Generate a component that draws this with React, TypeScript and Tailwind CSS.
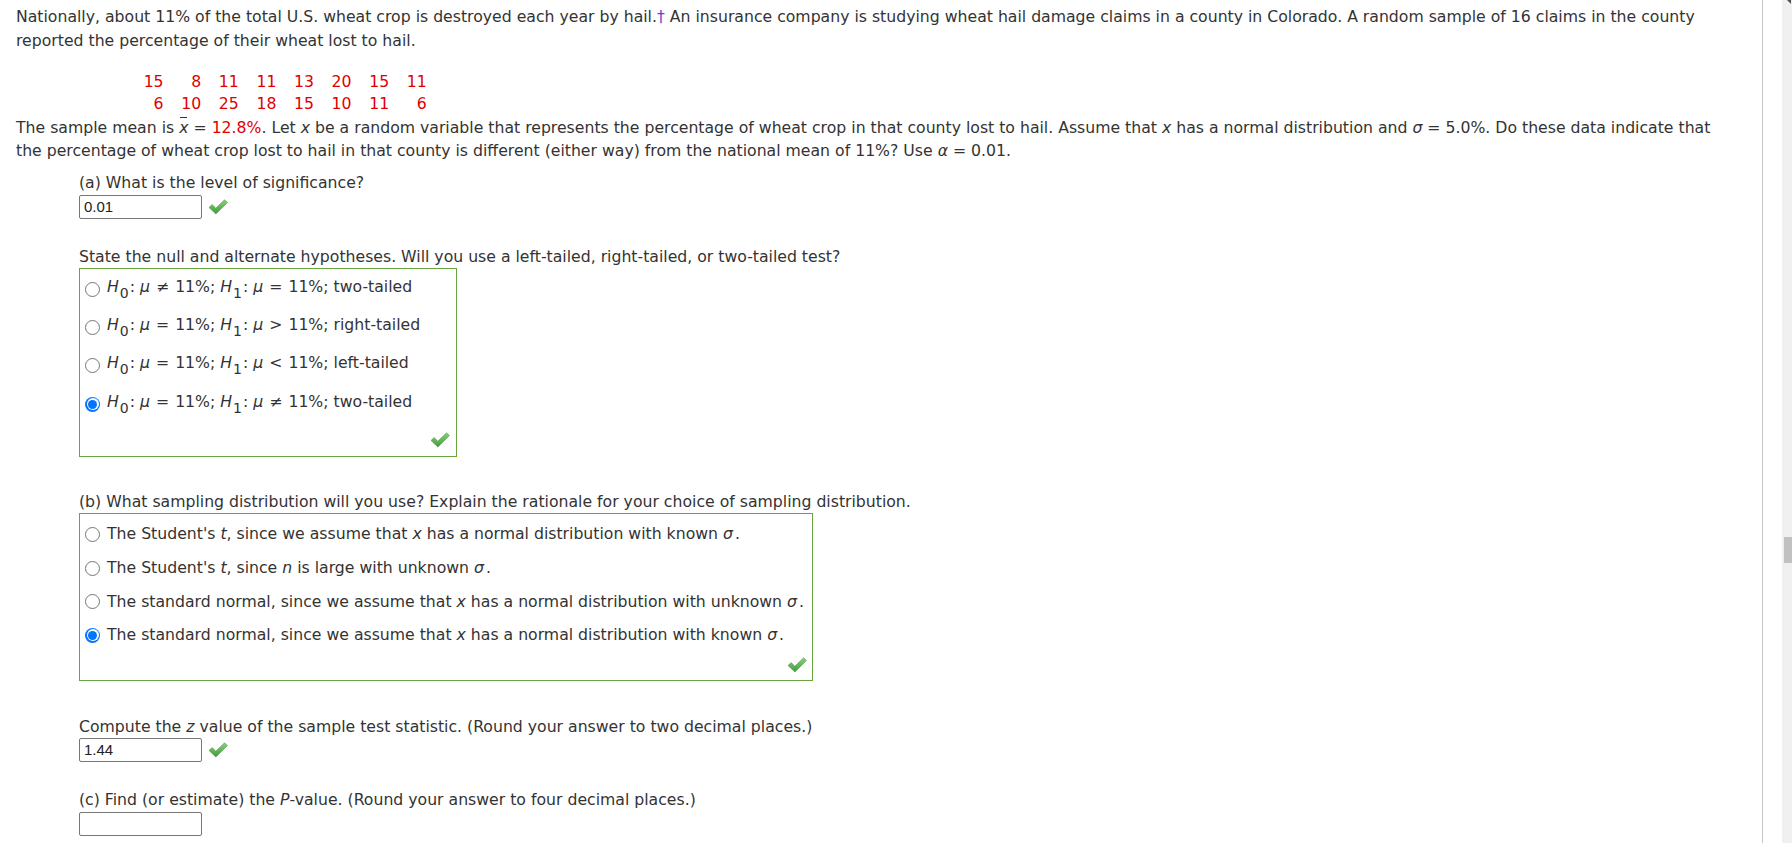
import type { ReactNode } from "react";

const sampleRows = [
  [15, 8, 11, 11, 13, 20, 15, 11],
  [6, 10, 25, 18, 15, 10, 11, 6],
];

function CheckMark() {
  return (
    <svg width="20" height="16" viewBox="0 0 20 16" className="shrink-0">
      <defs>
        <linearGradient id="chk" x1="0" y1="0" x2="0" y2="1">
          <stop offset="0" stopColor="#8fd17f" />
          <stop offset="1" stopColor="#3f9a3a" />
        </linearGradient>
      </defs>
      <path d="M1 8.5 L4.2 5.6 L7.8 9.2 L16.6 0.8 L19.4 3.6 L7.9 15 Z" fill="url(#chk)" stroke="#4a9a44" strokeWidth="0.6" />
    </svg>
  );
}

function Radio({ checked }: { checked?: boolean }) {
  if (checked) {
    return (
      <span className="flex h-[15px] w-[15px] shrink-0 items-center justify-center rounded-full bg-[#0075ff]">
        <span className="flex h-[12px] w-[12px] items-center justify-center rounded-full bg-white">
          <span className="h-[9px] w-[9px] rounded-full bg-[#0075ff]" />
        </span>
      </span>
    );
  }
  return <span className="h-[15px] w-[15px] shrink-0 rounded-full border border-[#767676] bg-white" />;
}

function AnswerBox({ value }: { value?: string }) {
  return (
    <div className="flex items-center gap-[6px]">
      <div className="flex h-[24px] w-[123px] items-center rounded-[2px] border border-[#767676] bg-white px-[4px] font-['Liberation_Sans',Arial,sans-serif] text-[15px] text-[#222]">
        {value}
      </div>
      {value && <CheckMark />}
    </div>
  );
}

// H with a dropped subscript, as the math renderer draws it
function H({ sub }: { sub: string }) {
  return (
    <>
      <i>H</i>
      <span className="pl-[1px] pr-[1px] align-[-6px] text-[14px]">{sub}</span>
    </>
  );
}

function Op({ children }: { children: ReactNode }) {
  return <span className="mx-[1px]">{children}</span>;
}

function Hyp({ h0, h1, kind }: { h0: string; h1: string; kind: string }) {
  return (
    <span className="whitespace-pre">
      <H sub="0" />: <i>μ</i> <Op>{h0}</Op> 11%; <H sub="1" />: <i>μ</i> <Op>{h1}</Op> 11%; {kind}
    </span>
  );
}

function Option({ checked, h, children }: { checked?: boolean; h: string; children: ReactNode }) {
  return (
    <div className={`flex items-center gap-[7px] pl-[5px] ${h}`}>
      <Radio checked={checked} />
      {children}
    </div>
  );
}

function Sigma() {
  return <i className="mr-[2px]">σ</i>;
}

export default function App() {
  return (
    <div className="flex h-[843px] w-full overflow-hidden bg-white font-['DejaVu_Sans',Verdana,sans-serif] text-[15.7px] text-[#333]">
      <div className="w-[1763px] shrink-0 border-r border-[#c8c8c8] pl-[16px] pt-[5px]">
        <p className="whitespace-nowrap leading-[24px]">
          Nationally, about 11% of the total U.S. wheat crop is destroyed each year by hail.
          <span className="text-[#6a3fd0]">†</span> An insurance company is studying wheat hail damage claims in a county
          in Colorado. A random sample of 16 claims in the county
          <br />
          reported the percentage of their wheat lost to hail.
        </p>

        <div className="ml-[110px] mt-[18px] grid grid-cols-[repeat(8,37.6px)] leading-[22px] text-[#e00000]">
          {sampleRows.flat().map((n, i) => (
            <span key={i} className="text-right">
              {n}
            </span>
          ))}
        </div>

        <p className="mt-[1px] whitespace-nowrap leading-[23px]">
          The sample mean is{" "}
          <span className="relative inline-block italic">
            x<span className="absolute left-[1px] top-[1px] h-[1px] w-[7px] bg-[#333]" />
          </span>{" "}
          = <span className="text-[#e00000]">12.8%</span>. Let <i>x</i> be a random variable that represents the
          percentage of wheat crop in that county lost to hail. Assume that <i>x</i> has a normal distribution and{" "}
          <i>σ</i> = 5.0%. Do these data indicate that
          <br />
          the percentage of wheat crop lost to hail in that county is different (either way) from the national mean of
          11%? Use <i>α</i> = 0.01.
        </p>

        <div className="ml-[63px]">
          <p className="mt-[10px] leading-[22px]">(a) What is the level of significance?</p>
          <div className="mt-[1px]">
            <AnswerBox value="0.01" />
          </div>

          <p className="mt-[27px] leading-[22px]">
            State the null and alternate hypotheses. Will you use a left-tailed, right-tailed, or two-tailed test?
          </p>
          <div className="flex h-[189px] w-[378px] flex-col border border-[#6aa43f]">
            <Option h="h-[39px] pt-[2px]">
              <Hyp h0="≠" h1="=" kind="two-tailed" />
            </Option>
            <Option h="h-[38px]">
              <Hyp h0="=" h1=">" kind="right-tailed" />
            </Option>
            <Option h="h-[39px]">
              <Hyp h0="=" h1="<" kind="left-tailed" />
            </Option>
            <Option checked h="h-[38px]">
              <Hyp h0="=" h1="≠" kind="two-tailed" />
            </Option>
            <div className="flex flex-1 items-end justify-end pb-[8px] pr-[6px]">
              <CheckMark />
            </div>
          </div>

          <p className="mt-[34px] leading-[22px]">
            (b) What sampling distribution will you use? Explain the rationale for your choice of sampling distribution.
          </p>
          <div className="flex h-[168px] w-[734px] flex-col border border-[#6aa43f] pt-[3px]">
            <Option h="h-[34px]">
              <span>
                The Student's <i>t</i>, since we assume that <i>x</i> has a normal distribution with known <Sigma />.
              </span>
            </Option>
            <Option h="h-[34px]">
              <span>
                The Student's <i>t</i>, since <i>n</i> is large with unknown <Sigma />.
              </span>
            </Option>
            <Option h="h-[33px]">
              <span>
                The standard normal, since we assume that <i>x</i> has a normal distribution with unknown <Sigma />.
              </span>
            </Option>
            <Option checked h="h-[34px]">
              <span>
                The standard normal, since we assume that <i>x</i> has a normal distribution with known <Sigma />.
              </span>
            </Option>
            <div className="flex flex-1 items-end justify-end pb-[7px] pr-[5px]">
              <CheckMark />
            </div>
          </div>

          <p className="mt-[35px] leading-[22px]">
            Compute the <i>z</i> value of the sample test statistic. (Round your answer to two decimal places.)
          </p>
          <AnswerBox value="1.44" />

          <p className="mt-[27px] leading-[22px]">
            (c) Find (or estimate) the <i>P</i>-value. (Round your answer to four decimal places.)
          </p>
          <div className="mt-[1px]">
            <AnswerBox />
          </div>
        </div>
      </div>

      <div className="w-[19px] shrink-0" />

      <div className="relative w-[10px] shrink-0 bg-[#f0f0f0]">
        <span className="absolute right-[1px] top-0 h-0 w-0 border-l-[4px] border-t-[4px] border-l-transparent border-t-[#505050]" />
        <div className="ml-[2px] mt-[537px] h-[26px] w-[8px] bg-[#c1c1c1]" />
      </div>
    </div>
  );
}
